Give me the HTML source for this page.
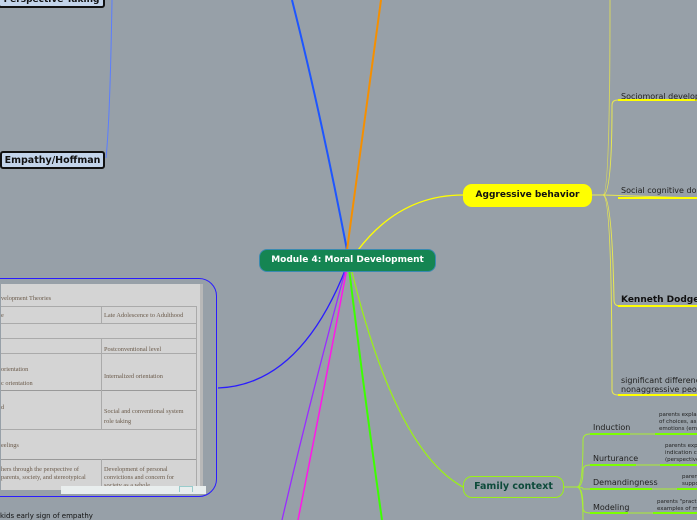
<!DOCTYPE html>
<html><head><meta charset="utf-8"><style>
body{margin:0;width:697px;height:520px;overflow:hidden;background:#97a0a8;position:relative;font-family:"DejaVu Sans","Liberation Sans",sans-serif}
.a{position:absolute;white-space:nowrap}
.bx{position:absolute;background:#c3d4ea;border:2px solid #111;border-radius:3px;font-weight:bold;font-size:9.5px;color:#111;padding:1px 2px;box-sizing:border-box;white-space:nowrap;text-align:center}
.t{font-family:"Liberation Serif",serif;font-size:6.3px;color:#6a5a4a;position:absolute;white-space:nowrap}
.s{font-size:8px;color:#222}
.xs{font-size:5.5px;color:#222;line-height:7px}
</style></head><body>
<svg width="697" height="520" style="position:absolute;left:0;top:0">
<g fill="none">
<path d="M347 250 Q320 110 292 0" stroke="#1e56ff" stroke-width="2"/>
<path d="M347 250 Q365 120 381 0" stroke="#f58f00" stroke-width="2"/>
<path d="M346 268 Q300 385 218 388" stroke="#2a1cff" stroke-width="1.3"/>
<path d="M346 268 Q310 400 282 520" stroke="#9a2bff" stroke-width="1.3"/>
<path d="M347 268 Q322 400 298 520" stroke="#ff17e8" stroke-width="1.5"/>
<path d="M349 268 Q365 400 382 520" stroke="#3cff00" stroke-width="2"/>
<path d="M351 268 Q395 450 463 487" stroke="#9af018" stroke-width="1.3"/>
<path d="M358 250 Q400 195 463 195" stroke="#ffff00" stroke-width="1.3"/>
<path d="M112 0 Q110 120 106 158" stroke="#5a7dff" stroke-width="1"/>
<path d="M592 195 L603 195 Q612 195 612 105 Q612 100 618 100 L697 100" stroke="#e8e850" stroke-width="1"/>
<path d="M603 195 Q610 195 610 0" stroke="#d6d660" stroke-width="1"/>
<path d="M603 195 L697 198" stroke="#e8e850" stroke-width="1"/>
<path d="M603 195 Q612 195 614 300 Q614 306 620 306 L697 306" stroke="#e8e850" stroke-width="1"/>
<path d="M603 195 Q612 195 612 390 Q612 395 618 395 L697 395" stroke="#e8e850" stroke-width="1"/>
<path d="M564 487 L577 487 Q583 487 583 440 Q583 434 590 434 L697 434" stroke="#a8f030" stroke-width="1"/>
<path d="M577 487 Q583 487 583 470 Q583 465 590 465 L697 465" stroke="#a8f030" stroke-width="1"/>
<path d="M577 487 Q583 487 583 489 L697 489" stroke="#a8f030" stroke-width="1"/>
<path d="M577 487 Q583 487 583 508 Q583 513 590 513 L697 513" stroke="#a8f030" stroke-width="1"/>
<path d="M577 487 Q583 487 583 520" stroke="#a8f030" stroke-width="1"/>
</g>
<g stroke-width="2">
<line x1="618" y1="100" x2="697" y2="100" stroke="#ffff00"/>
<line x1="618" y1="198" x2="697" y2="198" stroke="#ffff00"/>
<line x1="618" y1="306" x2="697" y2="306" stroke="#ffff00"/>
<line x1="618" y1="395" x2="697" y2="395" stroke="#ffff00"/>
<line x1="590" y1="434" x2="630" y2="434" stroke="#7cff00"/>
<line x1="655" y1="434" x2="697" y2="434" stroke="#7cff00"/>
<line x1="590" y1="465" x2="636" y2="465" stroke="#7cff00"/>
<line x1="660" y1="465" x2="697" y2="465" stroke="#7cff00"/>
<line x1="590" y1="489" x2="652" y2="489" stroke="#7cff00"/>
<line x1="677" y1="489" x2="697" y2="489" stroke="#7cff00"/>
<line x1="590" y1="513" x2="628" y2="513" stroke="#7cff00"/>
<line x1="653" y1="513" x2="697" y2="513" stroke="#7cff00"/>
</g>
</svg>

<div class="bx" style="left:-2px;top:-9px;width:107px;height:17px;line-height:12px;font-size:9px">Perspective Taking</div>
<div class="bx" style="left:0;top:151px;width:105px;height:18px;line-height:14px">Empathy/Hoffman</div>

<div class="a" style="left:259px;top:249px;width:177px;height:23px;background:#158552;border:1px solid #3a8ab0;border-radius:8px;box-sizing:border-box;color:#fff;font-weight:bold;font-size:9px;text-align:center;line-height:21px">Module 4: Moral Development</div>

<div class="a" style="left:463px;top:184px;width:129px;height:23px;background:#ffff00;border-radius:9px;color:#111;font-weight:bold;font-size:9px;text-align:center;line-height:23px">Aggressive behavior</div>
<div class="a" style="left:463px;top:476px;width:101px;height:22px;border:1px solid #9af018;border-radius:9px;box-sizing:border-box;color:#0d4a3a;font-weight:bold;font-size:9.5px;text-align:center;line-height:20px">Family context</div>

<div class="a s" style="left:621px;top:92px">Sociomoral developm</div>
<div class="a s" style="left:621px;top:186px">Social cognitive doma</div>
<div class="a" style="left:621px;top:295px;font-size:9px;font-weight:bold;color:#111">Kenneth Dodge</div>
<div class="a s" style="left:621px;top:376px;line-height:9px">significant difference<br>nonaggressive people</div>

<div class="a s" style="left:593px;top:423px;font-size:8px">Induction</div>
<div class="a s" style="left:593px;top:454px">Nurturance</div>
<div class="a s" style="left:593px;top:478px">Demandingness</div>
<div class="a s" style="left:593px;top:503px">Modeling</div>
<div class="a xs" style="left:659px;top:412px">parents expla<br>of choices, as<br>emotions (em</div>
<div class="a xs" style="left:665px;top:443px">parents exp<br>indication c<br>(perspective</div>
<div class="a xs" style="left:682px;top:474px">paren<br>suppo</div>
<div class="a xs" style="left:657px;top:499px">parents "practi<br>examples of m</div>

<div class="a" style="left:-30px;top:278px;width:247px;height:219px;border:1.5px solid #2a1cff;border-radius:18px;box-sizing:border-box;overflow:hidden">
 <div class="a" style="left:30px;top:5px;width:199px;height:206px;background:#d4d4d4;border-right:3px solid #b8b8b8">
  <div class="t" style="left:0;top:11px">velopment Theories</div>
  <div class="a" style="left:0;top:22px;width:195px;height:182px;border-right:1px solid #aaa"></div>
  <div class="a" style="left:0;top:22px;width:195px;border-top:1px solid #aaa"></div>
  <div class="a" style="left:0;top:39px;width:195px;border-top:1px solid #aaa"></div>
  <div class="a" style="left:0;top:54px;width:195px;border-top:1px solid #aaa"></div>
  <div class="a" style="left:0;top:69px;width:195px;border-top:1px solid #aaa"></div>
  <div class="a" style="left:0;top:106px;width:195px;border-top:1px solid #999"></div>
  <div class="a" style="left:0;top:145px;width:195px;border-top:1px solid #aaa"></div>
  <div class="a" style="left:0;top:175px;width:195px;border-top:1px solid #999"></div>
  <div class="a" style="left:100px;top:22px;height:17px;border-left:1px solid #aaa"></div>
  <div class="a" style="left:100px;top:54px;height:91px;border-left:1px solid #aaa"></div>
  <div class="a" style="left:100px;top:175px;height:29px;border-left:1px solid #aaa"></div>
  <div class="t" style="left:0;top:28px">e</div>
  <div class="t" style="left:103px;top:28px">Late Adolescence to Adulthood</div>
  <div class="t" style="left:103px;top:62px">Postconventional level</div>
  <div class="t" style="left:0;top:82px">orientation</div>
  <div class="t" style="left:0;top:96px">c orientation</div>
  <div class="t" style="left:103px;top:89px">Internalized orientation</div>
  <div class="t" style="left:0;top:120px">d</div>
  <div class="t" style="left:103px;top:123px;line-height:10px">Social and conventional system<br>role taking</div>
  <div class="t" style="left:0;top:158px">eelings</div>
  <div class="t" style="left:0;top:182px;line-height:8px">hers through the perspective of<br> parents, society, and stereotypical</div>
  <div class="t" style="left:103px;top:182px;line-height:8px">Development of personal<br>convictions and concern for<br>society as a whole</div>
  <div class="a" style="left:60px;top:202px;width:145px;height:8px;background:#e9eeee"></div>
  <div class="a" style="left:178px;top:202px;width:14px;height:6px;border:1px solid #9cc;border-bottom:none;box-sizing:border-box"></div>
 </div>
</div>
<div class="a" style="left:0;top:512px;font-size:7px;color:#111">kids early sign of empathy</div>
</body></html>
